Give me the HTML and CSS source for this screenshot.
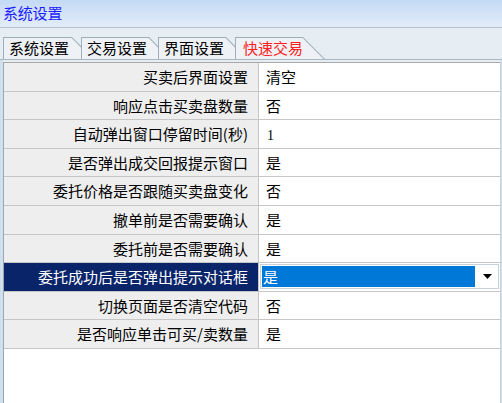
FILE: index.html
```html
<!DOCTYPE html>
<html lang="zh">
<head>
<meta charset="utf-8">
<title>系统设置</title>
<link rel="stylesheet" href="styles.css">
</head>
<body>
<div class="window">
  <div class="titlebar">系统设置</div>
  <div class="tabstrip">
    <div class="tab short w1"><div class="tab-in">系统设置</div></div>
    <div class="tab short w2"><div class="tab-in">交易设置</div></div>
    <div class="tab short w3"><div class="tab-in">界面设置</div></div>
    <div class="tab long w4"><div class="tab-in active">快速交易</div></div>
  </div>
  <div class="panel">
    <div class="grid">
      <div class="row"><div class="label">买卖后界面设置</div><div class="value">清空</div></div>
      <div class="row"><div class="label">响应点击买卖盘数量</div><div class="value">否</div></div>
      <div class="row"><div class="label">自动弹出窗口停留时间(秒)</div><div class="value"><span class="num">1</span></div></div>
      <div class="row"><div class="label">是否弹出成交回报提示窗口</div><div class="value">是</div></div>
      <div class="row"><div class="label">委托价格是否跟随买卖盘变化</div><div class="value">否</div></div>
      <div class="row"><div class="label">撤单前是否需要确认</div><div class="value">是</div></div>
      <div class="row"><div class="label">委托前是否需要确认</div><div class="value">是</div></div>
      <div class="row selected">
        <div class="label">委托成功后是否弹出提示对话框</div>
        <div class="value edit">
          <div class="combo">
            <span class="combo-text">是</span>
            <span class="combo-btn"><svg width="9" height="5" viewBox="0 0 9 5"><path d="M0 0H9L4.5 5Z" fill="#000"/></svg></span>
          </div>
        </div>
      </div>
      <div class="row"><div class="label">切换页面是否清空代码</div><div class="value">否</div></div>
      <div class="row"><div class="label">是否响应单击可买/卖数量</div><div class="value">是</div></div>
    </div>
  </div>
</div>
</body>
</html>
```
FILE: styles.css
```css
* { box-sizing: border-box; }
html, body { margin: 0; padding: 0; }
body {
  width: 502px;
  height: 403px;
  overflow: hidden;
  font-family: "Noto Sans CJK SC", "Noto Sans", sans-serif;
  font-size: 15px;
  color: #000;
  background: #cfdfee;
}
.window {
  display: flex;
  flex-direction: column;
  height: 403px;
}
.titlebar {
  height: 28px;
  flex: none;
  background: linear-gradient(#c3d9f4, #e3edf9);
  border-bottom: 1px solid #b3c3cf;
  color: #1c1cff;
  padding-left: 3px;
  line-height: 26px;
  letter-spacing: -0.2px;
}
.tabstrip {
  height: 32px;
  flex: none;
  display: flex;
  align-items: flex-end;
  padding-left: 3px;
  background: #e6eef3;
  border-bottom: 1px solid #aab6c0;
}
.gap { height: 2px; }
.tab {
  height: 22px;
  background: #9faebb;
  padding: 1px 0 0 1px;
}
.tab-in {
  height: 100%;
  background: #eef2f6;
  line-height: 20px;
  padding-left: 5px;
  white-space: nowrap;
}
.tab.short { clip-path: polygon(0 0, calc(100% - 9px) 0, 100% 9px, 100% 100%, 0 100%); }
.tab.short .tab-in { clip-path: polygon(0 0, calc(100% - 9.4px) 0, 100% 9.4px, 100% 100%, 0 100%); }
.tab.long { clip-path: polygon(0 0, calc(100% - 22px) 0, 100% 100%, 0 100%); }
.tab.long .tab-in { clip-path: polygon(0 0, calc(100% - 22.4px) 0, calc(100% - 1.4px) 100%, 0 100%); padding-left: 7px; }
.w1 { width: 78px; }
.w2 { width: 77px; }
.w3 { width: 77px; }
.w4 { width: 90px; }
.tab-in.active { color: #ff2020; }

.panel {
  flex: 1;
  margin: 0 1px 0 3px;
  background: #fff;
  border-left: 1px solid #9ea6ae;
  border-top: 1px solid #a9a9a9;
  border-right: 1px solid #c9d3dc;
  box-shadow: 0 -2px 0 #e6eef3;
  margin-top: 2px;
}
.grid {
  display: flex;
  flex-direction: column;
}
.row {
  display: flex;
  height: 28.6px;
  border-bottom: 1px solid #c6c6c6;
}
.label {
  width: 255px;
  flex: none;
  background: #eeeeee;
  border-right: 1px solid #c6c6c6;
  text-align: right;
  padding-right: 10px;
  line-height: 27px;
  white-space: nowrap;
}
.value {
  flex: 1;
  padding-left: 7px;
  line-height: 27px;
  background: #fff;
}
.num {
  font-family: "Liberation Serif", serif;
  font-size: 14px;
  padding-left: 1px;
}
.row.selected .label {
  background: #0a246a;
  color: #fff;
}
.value.edit {
  padding: 1px;
}
.combo {
  display: flex;
  height: 25px;
  border: 1px solid #c8d2dc;
  padding: 1px;
  background: #fff;
}
.combo-text {
  flex: 1;
  background: #0078d7;
  color: #fff;
  line-height: 21px;
  padding-left: 1px;
}
.combo-btn {
  width: 22px;
  display: flex;
  align-items: center;
  justify-content: center;
  padding-left: 2px;
}
.combo-btn svg { display: block; }
```
